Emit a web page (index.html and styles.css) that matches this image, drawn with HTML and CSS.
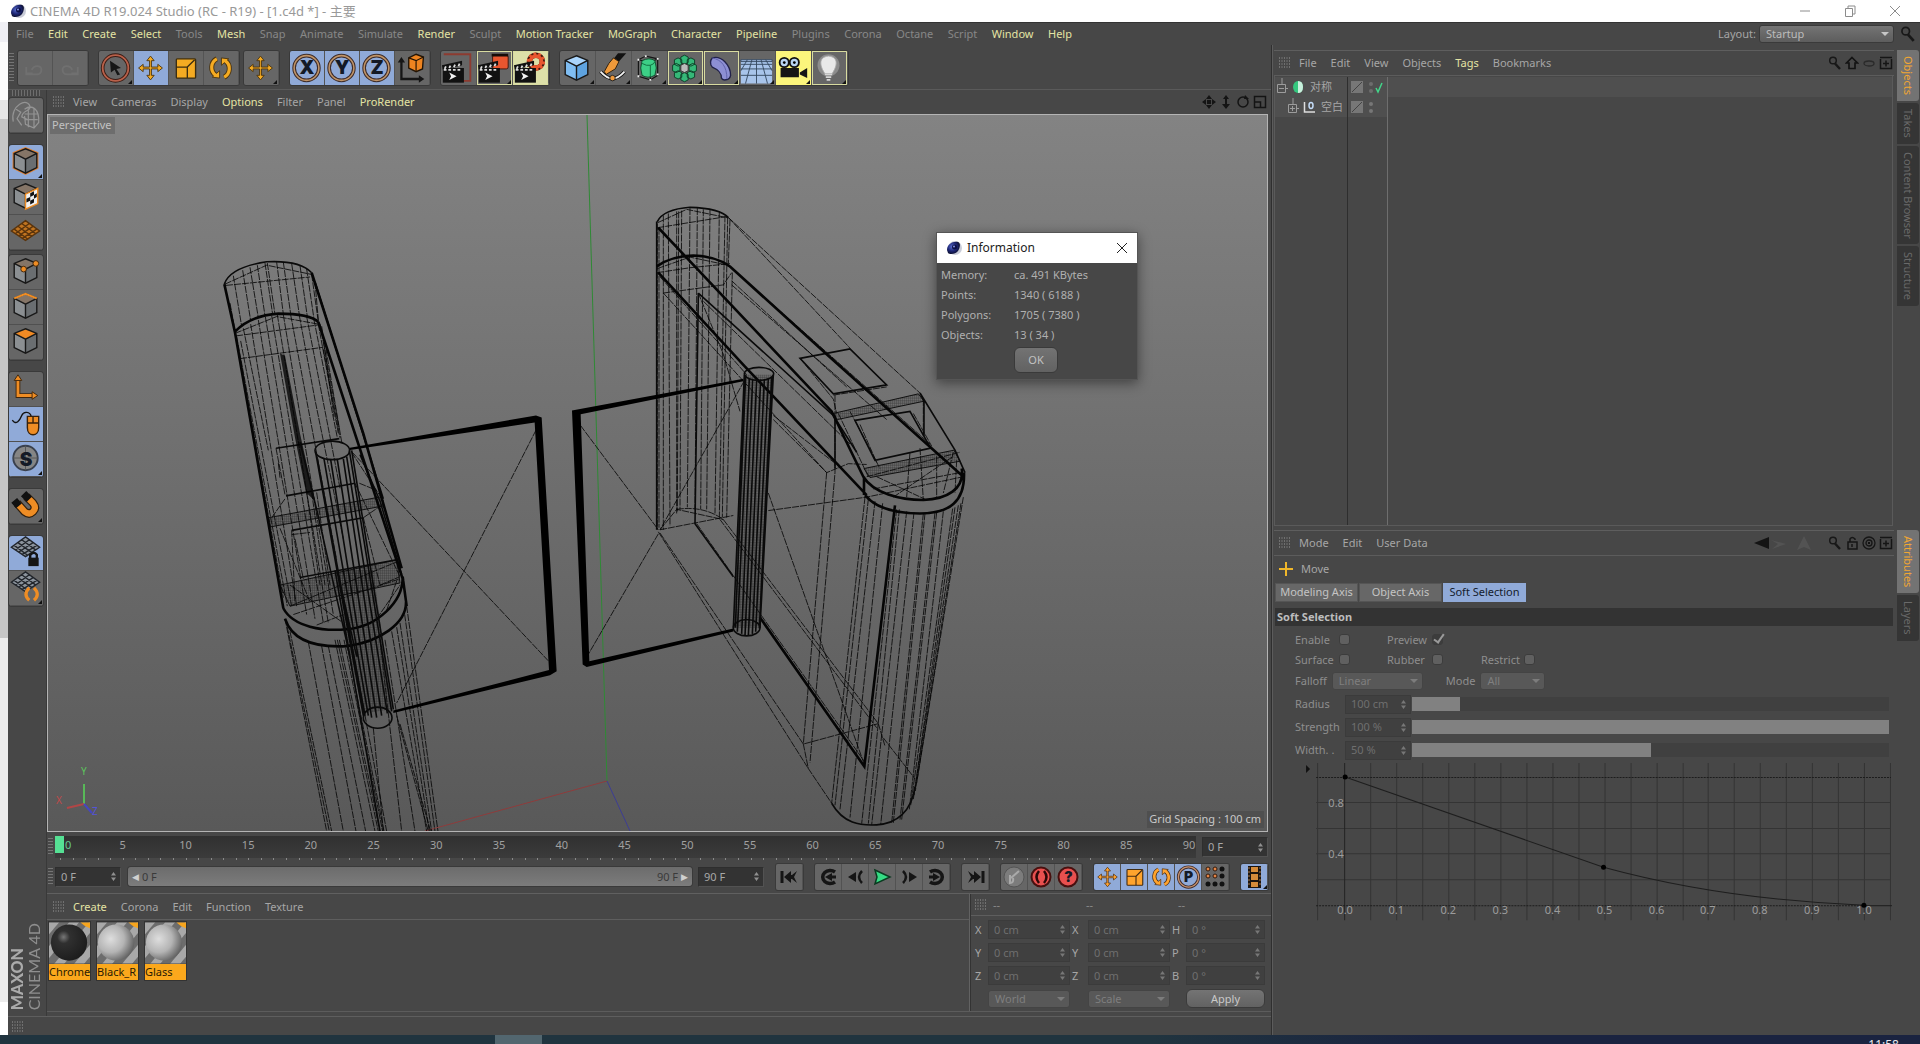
FILE: index.html
```html
<!DOCTYPE html>
<html lang="en">
<head>
<meta charset="utf-8">
<title>CINEMA 4D R19.024 Studio</title>
<link rel="stylesheet" href="styles.css">
</head>
<body>
<svg class="defs" aria-hidden="true">
  <defs>
    <radialGradient id="gDark" cx=".35" cy=".35" r=".7"><stop offset="0" stop-color="#777"/><stop offset=".25" stop-color="#303030"/><stop offset="1" stop-color="#1c1c1c"/></radialGradient>
    <radialGradient id="gLight" cx=".35" cy=".4" r=".75"><stop offset="0" stop-color="#dedede"/><stop offset=".5" stop-color="#b4b4b4"/><stop offset="1" stop-color="#4c4c4c"/></radialGradient>
    <radialGradient id="gLogo" cx=".4" cy=".4" r=".6"><stop offset="0" stop-color="#5a6ed0"/><stop offset=".6" stop-color="#1c2574"/><stop offset="1" stop-color="#0d1030"/></radialGradient>
    <pattern id="stripes" width="16" height="16" patternUnits="userSpaceOnUse" patternTransform="rotate(40)"><rect width="16" height="16" fill="#6c6c6c"/><rect width="8" height="16" fill="#a8a8a8"/></pattern>
    <pattern id="hatch" width="6" height="4" patternUnits="userSpaceOnUse"><path d="M0 1H6M2 0V4" stroke="#000" stroke-width="1" opacity=".55"/></pattern>
  </defs>
  <symbol id="logo" viewBox="0 0 16 16"><circle cx="9" cy="8" r="7" fill="#c9ccd8"/><path d="M1 10C1 4 7 1 12 2c3 1 2 6 0 9s-8 4-10 2z" fill="url(#gLogo)"/><circle cx="8.500" cy="7" r="2.500" fill="#0b0f45"/><circle cx="8" cy="6.500" r="1" fill="#8392e6"/></symbol>
  <symbol id="grip" viewBox="0 0 12 12"><path d="M0 1H12M0 4H12M0 7H12M0 10H12" stroke="#9a9a9a" stroke-width="1" stroke-dasharray="1 1.500"/></symbol>
  <symbol id="spin" viewBox="0 0 5 9"><path d="M0 3.500L2.500 0 5 3.500zM0 5.500L2.500 9 5 5.500z" fill="currentColor"/></symbol>
  <symbol id="mag" viewBox="0 0 14 14"><circle cx="5" cy="4.500" r="3.300" fill="none" stroke="#181818" stroke-width="1.500"/><path d="M7 7.500L12 13" stroke="#181818" stroke-width="2.400"/></symbol>
  <symbol id="home" viewBox="0 0 14 14"><path d="M7 1.500L12.500 7H10v5.500H4V7H1.500z" fill="none" stroke="#141414" stroke-width="1.700"/></symbol>
  <symbol id="eye" viewBox="0 0 14 14"><ellipse cx="7" cy="7.500" rx="5" ry="2.500" fill="none" stroke="#2a2a2a" stroke-width="1.300"/></symbol>
  <symbol id="plusbox" viewBox="0 0 14 14"><path d="M1.500 3V12.500H12.500V3M1 1.500H13M7 4.500v6M4 7.500h6" fill="none" stroke="#161616" stroke-width="1.500"/></symbol>
  <symbol id="undo" viewBox="0 0 36 34"><path d="M8 24h13c6-1 6-9 0-9-3 0-5 2-6 4m-6-3v7h7" fill="none" stroke="#707070" stroke-width="2"/></symbol>
  <symbol id="redo" viewBox="0 0 36 34"><path d="M28 24H15c-6-1-6-9 0-9 3 0 5 2 6 4m6-3v7h-7" fill="none" stroke="#707070" stroke-width="2"/></symbol>
  <symbol id="pick" viewBox="0 0 36 34"><circle cx="18" cy="17" r="14" fill="none" stroke="#3a1c14" stroke-width="4"/><circle cx="18" cy="17" r="14" fill="none" stroke="#b8604a" stroke-width="2"/><path d="M12 9l12 8-5 1 4 6-3 1-3-6-4 3z" fill="#161616"/></symbol>
  <symbol id="move" viewBox="0 0 36 34"><path d="M18 4l4 5h-3v7h7v-3l5 4-5 4v-3h-7v7h3l-4 5-4-5h3v-7h-7v3l-5-4 5-4v3h7V9h-3z" fill="#f5ab22" stroke="#4a3410" stroke-width="1"/></symbol>
  <symbol id="scale" viewBox="0 0 36 34"><rect x="8" y="7" width="21" height="21" rx="1" fill="#f5ab22" stroke="#3d2e10" stroke-width="1.500"/><path d="M8 16h12v12M20 16l8-8" fill="none" stroke="#3d2e10" stroke-width="1.500"/></symbol>
  <symbol id="rot" viewBox="0 0 36 34"><path d="M14 7a10.500 10.500 0 0 0-1 18M22 27a10.500 10.500 0 0 0 1-18" fill="none" stroke="#4a3410" stroke-width="5.500"/><path d="M9 27l8 1v-8zM27 7l-8-1v8z" fill="#f5ab22" stroke="#4a3410"/><path d="M14 7a10.500 10.500 0 0 0-1 18M22 27a10.500 10.500 0 0 0 1-18" fill="none" stroke="#f5ab22" stroke-width="3.500"/></symbol>
  <symbol id="ring" viewBox="0 0 36 34"><circle cx="18" cy="17" r="13.500" fill="none" stroke="#3d2c2a" stroke-width="4"/><circle cx="18" cy="17" r="13.500" fill="none" stroke="#c09468" stroke-width="1.700"/></symbol>
  <symbol id="coord" viewBox="0 0 36 34"><path d="M7 8v21h21" fill="none" stroke="#161616" stroke-width="2.500"/><path d="M3 11l4-6 4 6zM26 25l6 4-6 4z" fill="#161616"/><path d="M15 6l8-4 8 3-1 13-7 3-8-4z" fill="#ee8420" stroke="#241505" stroke-width="1.500"/><path d="M15 6l8 3 8-4M23 9v12" fill="none" stroke="#241505" stroke-width="1.300"/></symbol>
  <symbol id="clap" viewBox="0 0 36 34"><rect x="2" y="17" width="23" height="16" fill="#111"/><path d="M1 14l22-5v5L2 19z" fill="#111"/><path d="M4 18l2-4M9 17l2-4M14 16l2-4M19 15l2-4M3 19h20" stroke="#ddd" stroke-width="2" stroke-dasharray="3 2"/><path d="M9 22l8 4-8 4 2-4z" fill="#f2f2f2"/></symbol>
  <symbol id="cube" viewBox="0 0 34 34"><path class="c-top" d="M17 4l12 5-12 6L5 9z"/><path class="c-left" d="M5 9l12 6v15L5 24z"/><path class="c-right" d="M29 9l-12 6v15l12-6z"/><path d="M17 4l12 5v15l-12 6-12-6V9zM5 9l12 6 12-6M17 15v15" fill="none" stroke="#191919" stroke-width="1.500"/></symbol>
  <symbol id="pen" viewBox="0 0 36 34"><path d="M24 1h9l-8 9-5-4z" fill="#111"/><path d="M19 6l6 4-4 8-10 6-2-3 5-9z" fill="#f09a3a" stroke="#2a1a08"/><path d="M5 21q13 15 26 0" fill="none" stroke="#111" stroke-width="4"/><path d="M5 21q13 15 26 0" fill="none" stroke="#f1f1f1" stroke-width="2"/><circle cx="18" cy="28" r="3" fill="#f09a3a" stroke="#222"/></symbol>
  <symbol id="nurbs" viewBox="0 0 36 34"><path d="M7 8l8-4 13 3v18l-8 5-13-4zM7 8l13 3 8-4M20 11v19" fill="none" stroke="#161616" stroke-width="1.300"/><path d="M11 9q8-4 14 0 3 8 0 16-8 4-14 0-3-8 0-16z" fill="#3ccf86" stroke="#0d4a2c"/><path d="M11 12q5 3 9 2 4-1 5-4M20 14v13" fill="none" stroke="#0d6a3c"/><path d="M6 8h2M14 4h2M27 7h2M6 26h2M19 30h2M27 24h2" stroke="#eee" stroke-width="2"/></symbol>
  <symbol id="array" viewBox="0 0 36 34"><g fill="#35b878" stroke="#0c3c25"><path d="M14 5l4-2 4 2v6l-4 2-4-2zM14 24l4-2 4 2v6l-4 2-4-2zM5 14l4-2 4 2v6l-4 2-4-2zM23 14l4-2 4 2v6l-4 2-4-2zM7 8l4-2 4 2v5l-4 2-4-2zM21 8l4-2 4 2v5l-4 2-4-2zM7 22l4-2 4 2v5l-4 2-4-2zM21 22l4-2 4 2v5l-4 2-4-2z"/></g><path d="M14 14l4-2 4 2v6l-4 2-4-2z" fill="#bbb" stroke="#333"/></symbol>
  <symbol id="bend" viewBox="0 0 36 34"><path d="M9 6c10-3 20 8 20 19-1 6-9 6-10 3 0-6-3-9-10-12-3-3-2-8 0-10z" fill="#8d8fd4" stroke="#23234a" stroke-width="1.500"/><path d="M9 6c10 2 16 9 16 23" fill="none" stroke="#5d5fa8"/></symbol>
  <symbol id="floor" viewBox="0 0 36 34"><path d="M1 8h34v26H1z" fill="#a8c4ea"/><path d="M1 8h34v2H1zM1 13h34M1 18h34M1 25h34M13 8L6 34M18 8v26M23 8l7 26M8 8L1 20M28 8l7 12" fill="none" stroke="#34485f"/></symbol>
  <symbol id="cam" viewBox="0 0 36 34"><circle cx="9" cy="11" r="5" fill="#b8d4f4" stroke="#111" stroke-width="2"/><circle cx="20" cy="11" r="5" fill="#b8d4f4" stroke="#111" stroke-width="2"/><circle cx="9" cy="11" r="1.500"/><circle cx="20" cy="11" r="1.500"/><path d="M5 17h20v10H5zM26 22l8-5v11l-8-4z" fill="#151515"/></symbol>
  <symbol id="bulb" viewBox="0 0 36 34"><circle cx="18" cy="14" r="12" fill="#8c8c8c"/><path d="M18 4c-12 1-9 12-4 19h8c5-7 8-18-4-19z" fill="#e9e9e9" stroke="#aaa"/><path d="M14 24h8M15 27h6M16 30h4" stroke="#d6d6d6" stroke-width="2"/></symbol>
  <symbol id="sculpt" viewBox="0 0 34 34"><path d="M4 25C0 8 20-2 22 10c-2 5-8 3-9 10l6 3M16 12c8-6 16 0 15 14l-5 6-9-4-1-9M20 10v21M26 11v20M16 17h14M16 23h14M7 12l5 3-4 7 5 7" fill="none" stroke="#949494" stroke-width="1.300"/></symbol>
  <symbol id="mesh" viewBox="0 0 34 34"><path class="m-fill" d="M17 6l15 11-15 10L2 17z"/><path class="m-line" d="M17 6l15 11-15 10L2 17zM13 9l15 11M9 12l15 11M5 15l15 11M21 9L6 20M25 12L10 22M29 15L13 25" fill="none" stroke-width="1.500"/></symbol>
  <symbol id="axis" viewBox="0 0 34 34"><path d="M9 6v19h18" fill="none" stroke="#40260c" stroke-width="5"/><path d="M9 6v19h18" fill="none" stroke="#ef8d24" stroke-width="3"/><path d="M5 9l4-6 4 6zM24 21l6 4-6 4z" fill="#ef8d24" stroke="#40260c"/></symbol>
  <symbol id="mouse" viewBox="0 0 34 34"><path d="M3 14c4 6 8 0 10-5s9-4 10 1" fill="none" stroke="#141414" stroke-width="1.500"/><path d="M19 10h12v12c0 10-12 10-12 0z" fill="#ef8d24" stroke="#3a220a" stroke-width="1.500"/><path d="M19 17h12M25 10v7" stroke="#3a220a" stroke-width="1.500"/></symbol>
  <symbol id="magnet" viewBox="0 0 34 34"><path d="M8 15l8 9q5 4 9 0t0-9L18 8" fill="none" stroke="#30200f" stroke-width="9"/><path d="M8 15l8 9q5 4 9 0t0-9L18 8" fill="none" stroke="#ef8d24" stroke-width="6.500"/><path d="M5 12l5 6M15 5l6 6" stroke="#111" stroke-width="8"/></symbol>
  <symbol id="first" viewBox="0 0 27 26"><path d="M6 7v12" stroke="#151515" stroke-width="3"/><path d="M8 13l7-6v4h1l5-4-3 6 3 6-5-4h-1v4z" fill="#151515"/></symbol>
  <symbol id="loop" viewBox="0 0 27 26"><path d="M20 8a7.500 6.500 0 1 0 0 10" fill="none" stroke="#151515" stroke-width="3.500"/><path d="M10 13l7-4v2.500h4v3h-4V17z" fill="#151515"/></symbol>
  <symbol id="prevk" viewBox="0 0 27 26"><path d="M6 13l8-5v10z" fill="#151515"/><path d="M20 7q-6 6 0 12" fill="none" stroke="#151515" stroke-width="2.500"/></symbol>
  <symbol id="play" viewBox="0 0 27 26"><path d="M6 6l15 7-15 7 2-7z" fill="#35dc84" stroke="#0b3a20" stroke-width="1.500"/></symbol>
  <symbol id="globe" viewBox="0 0 34 34"><circle cx="17" cy="17" r="13" fill="#858585" stroke="#39404d" stroke-width="2"/><path d="M4 17h26M17 4v26" stroke="#555"/></symbol>
</svg>

<header class="titlebar">
  <svg class="i16"><use href="#logo"/></svg>
  <h1>CINEMA 4D R19.024 Studio (RC - R19) - [1.c4d *] - 主要</h1>
  <div class="winbtns">
    <button aria-label="Minimize"><svg viewBox="0 0 12 12"><path d="M1 6h10"/></svg></button>
    <button aria-label="Restore"><svg viewBox="0 0 12 12"><path d="M1.500 3.500h7v8h-7zM4 3V1h7v8H9"/></svg></button>
    <button aria-label="Close"><svg viewBox="0 0 12 12"><path d="M1 1l10 10M11 1L1 11"/></svg></button>
  </div>
</header>

<div class="desk">
  <div class="behind"></div>
  <div class="app">
    <nav class="mainmenu">
      <div class="menu dim">
        <button>File</button><button class="hot">Edit</button><button class="hot">Create</button><button class="hot">Select</button><button>Tools</button><button class="hot">Mesh</button><button>Snap</button><button>Animate</button><button>Simulate</button><button class="hot">Render</button><button>Sculpt</button><button class="hot">Motion Tracker</button><button class="hot">MoGraph</button><button class="hot">Character</button><button class="hot">Pipeline</button><button>Plugins</button><button>Corona</button><button>Octane</button><button>Script</button><button class="hot">Window</button><button class="hot">Help</button>
      </div>
      <div class="layoutpick">
        <label for="layout">Layout:</label>
        <span class="select grow"><select id="layout"><option>Startup</option></select></span>
        <svg class="i16"><use href="#mag"/></svg>
      </div>
    </nav>

    <div class="work">
      <div class="left">
        <div class="toolbar">
          <i class="vgrip"></i>
          <div class="bgroup"><button aria-label="Undo"><svg><use href="#undo"/></svg></button><button aria-label="Redo"><svg><use href="#redo"/></svg></button></div>
          <div class="pair">
            <div class="bgroup"><button class="more" aria-label="Live selection"><svg><use href="#pick"/></svg></button><button class="on" aria-label="Move"><svg><use href="#move"/></svg></button><button aria-label="Scale"><svg><use href="#scale"/></svg></button><button aria-label="Rotate"><svg><use href="#rot"/></svg></button></div>
            <div class="bgroup"><button class="more" aria-label="Last tool"><svg><use href="#move"/></svg></button></div>
          </div>
          <div class="bgroup"><button class="on letter"><svg><use href="#ring"/></svg><b>X</b></button><button class="on letter"><svg><use href="#ring"/></svg><b>Y</b></button><button class="on letter"><svg><use href="#ring"/></svg><b>Z</b></button><button aria-label="Coordinate system"><svg><use href="#coord"/></svg></button></div>
          <div class="bgroup roomy">
            <button aria-label="Render view"><svg viewBox="0 0 36 34"><path d="M3 2h29v29h-8" fill="none" stroke="#8d3b30" stroke-width="2"/><use href="#clap"/></svg></button>
            <button class="more yel" aria-label="Render to picture viewer"><svg viewBox="0 0 36 34"><rect x="17" y="3" width="17" height="15" rx="2" fill="#e8562f" stroke="#3a150c"/><path d="M16 3h18" stroke="#160c08" stroke-width="3"/><use href="#clap"/></svg></button>
            <button class="yel pale" aria-label="Render settings"><svg viewBox="0 0 36 34"><circle cx="25" cy="10" r="7" fill="none" stroke="#47190d" stroke-width="6"/><circle cx="25" cy="10" r="8.500" fill="none" stroke="#e8562f" stroke-width="3" stroke-dasharray="3 2.300"/><circle cx="25" cy="10" r="6" fill="none" stroke="#e8562f" stroke-width="4"/><use href="#clap"/></svg></button>
          </div>
          <div class="bgroup roomy">
            <button class="more" aria-label="Cube"><svg class="blue"><use href="#cube"/></svg></button><button class="more" aria-label="Pen"><svg><use href="#pen"/></svg></button><button class="more" aria-label="Subdivision surface"><svg><use href="#nurbs"/></svg></button><button class="more yel" aria-label="Array"><svg><use href="#array"/></svg></button><button class="more yel" aria-label="Bend"><svg><use href="#bend"/></svg></button><button class="more" aria-label="Floor"><svg><use href="#floor"/></svg></button><button class="more bright" aria-label="Camera"><svg><use href="#cam"/></svg></button><button class="more yel" aria-label="Light"><svg><use href="#bulb"/></svg></button>
          </div>
        </div>

        <div class="stage">
          <aside class="palette">
            <i class="hgrip"></i>
            <div class="vgroup"><button aria-label="Sculpt"><svg><use href="#sculpt"/></svg></button></div>
            <div class="vpair">
              <div class="vgroup">
                <button class="on more" aria-label="Model"><svg class="grey" viewBox="0 0 34 34"><path d="M17 4l12 5v15l-12 6-12-6V9z" fill="none" stroke="#e08030" stroke-width="3.500"/><use href="#cube"/></svg></button>
                <button aria-label="Texture"><svg class="grey" viewBox="0 0 34 34"><use href="#cube"/><path d="M17 15l13-6v16l-13 6z" fill="#f1f1f1" stroke="#ef8d24" stroke-width="1.500"/><path d="M18 20l4-2v4l-4 2zM22 14l4-2v4l-4 2zM22 22l4-2v4l-4 2zM26 16l3-2v4l-3 2z" fill="#111"/></svg></button>
                <button aria-label="Workplane"><svg class="omesh"><use href="#mesh"/></svg></button>
              </div>
              <div class="vgroup">
                <button aria-label="Points"><svg class="grey" viewBox="0 0 34 34"><use href="#cube"/><g fill="#ef8d24" stroke="#40260c"><circle cx="15" cy="15" r="3"/><circle cx="28" cy="9" r="3"/></g></svg></button>
                <button aria-label="Edges"><svg class="grey" viewBox="0 0 34 34"><use href="#cube"/><path d="M5 9l12-5 12 5" fill="none" stroke="#ef8d24" stroke-width="2"/></svg></button>
                <button aria-label="Polygons"><svg class="grey otop"><use href="#cube"/></svg></button>
              </div>
            </div>
            <div class="vgroup">
              <button aria-label="Axis"><svg><use href="#axis"/></svg></button>
              <button class="on" aria-label="Tweak"><svg><use href="#mouse"/></svg></button>
              <button class="on more letter"><svg><use href="#globe"/></svg><b>S</b></button>
            </div>
            <div class="vgroup"><button class="more" aria-label="Snap"><svg><use href="#magnet"/></svg></button></div>
            <div class="vgroup">
              <button class="on" aria-label="Lock workplane"><svg class="dmesh" viewBox="0 0 34 34"><use href="#mesh" y="-5"/><path d="M22 24v-4q4-4 7 0v4" fill="none" stroke="#151515" stroke-width="2.500"/><rect x="20" y="23" width="11" height="9" fill="#151515"/></svg></button>
              <button class="more" aria-label="Planar workplane"><svg class="dmesh" viewBox="0 0 34 34"><use href="#mesh" y="-5"/><path d="M21 18q-7 7 0 13M26 18q7 7 0 13" fill="none" stroke="#ef8d24" stroke-width="3.500"/></svg></button>
            </div>
            <p class="brand"><b>MAXON</b><span>CINEMA 4D</span></p>
          </aside>

          <div class="center">
            <nav class="bar">
              <svg class="i12"><use href="#grip"/></svg>
              <div class="menu"><button>View</button><button>Cameras</button><button>Display</button><button class="hot">Options</button><button>Filter</button><button>Panel</button><button class="hot">ProRender</button></div>
              <div class="baricons">
                <svg viewBox="0 0 14 14"><path d="M7 0l3 4H4zM7 14l3-4H4zM0 7l4-3v6zM14 7l-4-3v6zM5 5h4v4H5z" fill="#141414"/></svg>
                <svg viewBox="0 0 14 14"><path d="M7 0l3 4H8v5h3l-4 5-4-5h3V4H4z" fill="#141414"/></svg>
                <svg viewBox="0 0 14 14"><circle cx="7" cy="7" r="5" fill="none" stroke="#141414" stroke-width="1.500"/><path d="M9 0l4 4H8z" fill="#141414"/></svg>
                <svg viewBox="0 0 14 14"><path d="M1.500 1.500h11v11h-11zM1.500 7h6v5" fill="none" stroke="#141414" stroke-width="1.500"/></svg>
              </div>
            </nav>

            <main class="viewport">
              <svg class="scene" viewBox="47 114 1221 716" preserveAspectRatio="xMidYMid slice" aria-label="Wireframe of a turnstile">
                <path d="M587 114L607 780" stroke="#2f8a35" fill="none"/>
                <path d="M607 780L425 830" stroke="#8e3c3c" fill="none"/>
                <path d="M607 780L630 830" stroke="#3d3d94" fill="none"/>
                <g class="wire" transform="translate(200 180) scale(.33333 .42092)">
                  <g class="w1">
                    <path d="M78 248L330 228M108 368L355 342M75 245L200 200L335 222M105 362L230 322L355 340M120 422L370 395"/>
                    <path d="M100 225L125 345M128 212L152 332M150 205L175 325M172 200L195 320M195 195L218 317M202 195L225 317M230 193L250 316M250 193L272 316M275 196L298 318M300 201L322 322M320 209L342 328M335 222L355 335"/>
                    <path d="M90 290L250 990M110 370L262 1010M122 380L275 1010M130 350L205 640M152 340L290 1010M175 330L320 1030M196 322L345 1040M215 320L370 1050M232 318L385 1050M250 318L400 1030M272 318L410 900M298 320L345 520L430 850M320 322L420 730M342 330L412 610M355 340L415 600M360 340L418 590M370 400L420 610M378 400L425 620M345 240L355 330M365 345L402 560"/>
                    <path d="M228 635L255 745M235 670L240 705M215 800L255 755M320 740L360 960M335 740L375 960M350 740L390 960M240 825L330 1000M275 830L285 1000"/>
                    <path d="M455 645L550 760M465 718L600 940M478 718L530 735M490 800L545 770M275 840L330 835M285 850L310 945M490 800L540 960M540 960L600 940M270 1010L590 905M280 1030L600 945M270 960L430 1050M350 1055L430 1030M530 1040L600 960M560 1020L590 950"/>
                    <path d="M255 1040L380 1545M262 1060L388 1545M270 1070L395 1545M325 1095L430 1545M365 1105L468 1545M385 1105L497 1545M405 1090L525 1545M412 1090L535 1545M418 1090L540 1545M432 1090L548 1545M440 1100L552 1545M455 1100L560 1545M540 1090L605 1545M555 1090L645 1545M575 1070L680 1545M590 1060L688 1545M600 1050L695 1545M614 1030L705 1545M620 1010L714 1545M590 1270L685 1545M600 1290L692 1545M520 1300L550 1545"/>
                    <path d="M1008 592L590 1240M455 643L1045 1140"/>
                  </g>
                  <path class="hat" d="M205 800L545 750L550 772L210 822zM240 960L590 900L600 955L270 1010z"/>
                  <path class="w2" d="M73 245Q90 205 200 192Q300 188 335 218M228 635L418 612M258 748L465 718M275 830L490 800M300 942L590 900M480 650L540 760L605 935M345 240L550 755"/>
                  <path class="w3" d="M73 245L105 360L250 1015M105 358Q150 320 235 315Q330 315 355 335M335 218L490 600L605 920M355 335L560 830L610 950M250 1015C280 1060 370 1070 440 1065C530 1060 610 1000 608 940M255 1040C280 1100 370 1108 440 1105C540 1095 620 1050 618 1000M608 940L620 1010"/>
                  <path d="M240 410L255 415L300 600L345 760L318 740L285 610z" opacity=".75" fill="#000"/>
                  <path d="M405 925L520 925L575 1255L490 1265L450 1130z" fill="url(#hatch)"/>
                  <path class="w2" d="M347 645L490 1270M352 660L495 1270M372 660L505 1270M392 662L515 1275M412 662L530 1275M430 660L545 1270M440 655L562 1265M448 640L575 1260M455 640L580 1255M405 925L450 1130L540 1545M412 925L470 1130M300 620L350 780L450 1130"/>
                  <ellipse class="w2" cx="397" cy="640" rx="52" ry="22"/><ellipse class="w2" cx="533" cy="1275" rx="43" ry="25"/>
                  <path d="M450 634L1008 557L1025 562L1070 1165L1050 1174L580 1264V1258L1047 1162L1004 574L450 639z" fill-rule="evenodd" fill="#000"/>
                </g>
                <g class="wire" transform="translate(560 190) scale(.33333 .40816)">
                  <g class="w1">
                    <path d="M292 90L505 62M292 78L380 45L505 66M292 200L390 188L510 178M292 190L390 162L505 182M310 250L490 230L515 200M300 830L350 780L490 805M350 780Q430 770 490 805"/>
                    <path d="M292 80V830M297 90V825M310 60V830M325 55L330 820M350 50V790M356 50L352 785M365 48L360 780M390 42L382 775M412 42L405 780M430 45L422 780M450 45L440 780M478 50L465 790M495 60L478 800M503 65L487 800M510 70L505 180M517 200L500 800"/>
                    <path d="M505 65L870 385M505 65L1080 495M510 185L1110 620M515 230L980 560M310 250L800 690M515 220L860 480M300 210L560 450M415 250L490 400L540 540M430 270L870 620M625 740L915 1410M640 560L800 690L865 668L920 670M800 690L730 1355L745 1415M825 500V690L750 1400M640 550L830 670"/>
                    <path d="M300 830L520 795M625 783L920 750L1210 700M295 835L745 1415L815 1500M300 838L730 1355L955 1305M490 805L955 1305L975 1360M480 805L950 1315M410 815L915 1400M970 1340L1065 1440"/>
                    <path d="M915 750L815 1500M925 755L825 1505M945 760L840 1515M968 765L870 1535M1010 780L905 1550M1018 780L925 1550M1040 785L935 1553M1062 787L962 1553M1090 790L995 1548M1095 790L1000 1548M1125 788L1020 1540M1130 788L1025 1540M1150 785L1048 1515M1178 778L1052 1505M1185 775L1060 1490M1195 770L1062 1480M1203 765L1066 1470M1210 750L1070 1450"/>
                    <path d="M720 410L820 510L830 545M835 545L925 700M870 540L960 680M820 500L980 480M900 572L950 665M1060 545L1115 625M1090 510V600M920 700L1200 640M940 730L1200 690M1000 750L1180 650M950 700L1100 757M1050 640L1040 750M1080 630L1090 757M1130 650L1130 750M1180 640L1150 740M1190 660L1185 740"/>
                    <path d="M62 575L295 830M295 840L85 1135M553 465L300 830"/>
                  </g>
                  <path class="hat" d="M820 545L1075 497L1092 515L832 560zM912 680L1182 635L1200 662L930 702z"/>
                  <path class="w2" d="M292 75Q310 45 390 40Q480 42 505 65M290 75V830M720 410L870 387L980 475L820 497zM885 562L1050 540L1112 630L945 660zM1080 495L1185 635L1215 690M415 250L820 550L890 640M415 250L405 815L520 945M815 1500C850 1550 900 1555 950 1553C1010 1550 1055 1520 1065 1460M825 550V680M1080 495L1092 515V600"/>
                  <path class="w3" d="M290 185Q330 160 400 158Q470 160 510 185L800 400L1210 700M295 90L815 540L910 700M295 200L555 430L920 745M910 700C940 740 1020 757 1090 757C1160 755 1215 730 1205 680M915 745C950 780 1020 790 1080 790C1170 790 1215 760 1212 690M912 700V745M600 1045L913 1410L1005 770"/>
                  <path d="M553 450L640 450L600 1070L520 1070z" fill="url(#hatch)"/>
                  <path class="w2" d="M553 450L520 1070M557 450L526 1070M568 460L532 1080M578 460L545 1085M590 462L555 1090M602 462L565 1090M613 462L577 1085M625 458L587 1080M635 455L598 1072M640 450L600 1070"/>
                  <ellipse class="w2" cx="597" cy="448" rx="44" ry="16"/><ellipse class="w2" cx="560" cy="1070" rx="40" ry="20"/>
                  <path d="M36 538L550 460V466L62 547L88 1152L520 1072V1079L80 1166L68 1160z" fill="#000"/>
                </g>
                <g fill="none" stroke-width="2"><path d="M84 803V783" stroke="#58b858"/><path d="M84 803L67 807" stroke="#b04646"/><path d="M84 803L92 812" stroke="#4646c0"/></g>
                <g class="gizmotext"><text x="81" y="774" fill="#5cc45c">Y</text><text x="56" y="803" fill="#c04a4a">X</text><text x="92" y="814" fill="#5454d8">Z</text></g>
              </svg>
              <span class="vtag">Perspective</span>
              <span class="vtag grid">Grid Spacing : 100 cm</span>
              <section class="dialog" role="dialog" aria-labelledby="dt">
                <header><svg class="i16"><use href="#logo"/></svg><h2 id="dt">Information</h2><button aria-label="Close"><svg viewBox="0 0 12 12"><path d="M1 1l10 10M11 1L1 11"/></svg></button></header>
                <dl><dt>Memory:</dt><dd>ca. 491 KBytes</dd><dt>Points:</dt><dd>1340 ( 6188 )</dd><dt>Polygons:</dt><dd>1705 ( 7380 )</dd><dt>Objects:</dt><dd>13 ( 34 )</dd></dl>
                <button class="ok">OK</button>
              </section>
            </main>

            <div class="rulerrow">
              <i class="vgrip"></i>
              <div class="ruler"><span class="zero"><i></i>0</span><span>5</span><span>10</span><span>15</span><span>20</span><span>25</span><span>30</span><span>35</span><span>40</span><span>45</span><span>50</span><span>55</span><span>60</span><span>65</span><span>70</span><span>75</span><span>80</span><span>85</span><span>90</span></div>
              <span class="field w65"><input value="0 F" aria-label="Current frame"><svg><use href="#spin"/></svg></span>
            </div>

            <div class="transport">
              <div class="range">
                <i class="vgrip"></i>
                <span class="field w65"><input value="0 F" aria-label="Start frame"><svg><use href="#spin"/></svg></span>
                <div class="scrub"><button>◀</button><span>0 F</span><span class="end">90 F</span><button>▶</button></div>
                <span class="field w65"><input value="90 F" aria-label="End frame"><svg><use href="#spin"/></svg></span>
              </div>
              <div class="tgroup"><button aria-label="Go to start"><svg><use href="#first"/></svg></button></div>
              <div class="tgroup"><button aria-label="Previous key"><svg><use href="#loop"/></svg></button><button aria-label="Previous frame"><svg><use href="#prevk"/></svg></button><button aria-label="Play"><svg><use href="#play"/></svg></button><button aria-label="Next frame"><svg class="flip"><use href="#prevk"/></svg></button><button aria-label="Next key"><svg class="flip"><use href="#loop"/></svg></button></div>
              <div class="tgroup"><button aria-label="Go to end"><svg class="flip"><use href="#first"/></svg></button></div>
              <div class="tgroup">
                <button aria-label="Record"><svg viewBox="0 0 27 26"><circle cx="13" cy="13" r="10" fill="#7c7c7c" stroke="#555"/><path d="M18 7l-8 7m-1-3v8q4 0 3-5" stroke="#a9a9a9" stroke-width="2" fill="none"/></svg></button>
                <button aria-label="Autokey"><svg viewBox="0 0 27 26"><circle cx="13" cy="13" r="9.500" fill="#e8504f" stroke="#48100f" stroke-width="2"/><path d="M11 7q-5 6 0 12M16 7q5 6 0 12" stroke="#2c0808" stroke-width="2.500" fill="none"/></svg></button>
                <button class="letter" aria-label="Keyframe help"><svg viewBox="0 0 27 26"><circle cx="13" cy="13" r="9.500" fill="#e8504f" stroke="#48100f" stroke-width="2"/></svg><b>?</b></button>
              </div>
              <div class="tgroup orange">
                <button class="on" aria-label="Position"><svg><use href="#move"/></svg></button><button class="on" aria-label="Scale key"><svg><use href="#scale"/></svg></button><button class="on" aria-label="Rotation key"><svg><use href="#rot"/></svg></button><button class="on letter"><svg><use href="#ring"/></svg><b>P</b></button>
                <button aria-label="Point level"><svg viewBox="0 0 27 26"><g fill="#d9893a" stroke="#2b1a0b"><circle cx="6" cy="5" r="2"/><circle cx="13" cy="5" r="2"/><circle cx="6" cy="12" r="2"/><circle cx="13" cy="12" r="2"/></g><g fill="#111"><circle cx="20" cy="5" r="2.500"/><circle cx="20" cy="12" r="2.500"/><circle cx="6" cy="20" r="2.500"/><circle cx="13" cy="20" r="2.500"/><circle cx="20" cy="20" r="2.500"/></g></svg></button>
              </div>
              <div class="tgroup"><button class="on more" aria-label="Timeline"><svg viewBox="0 0 27 26"><rect x="7" y="2" width="13" height="22" fill="#1b1510"/><path d="M10 3h7v5h-7zM10 10h7v6h-7zM10 18h7v5h-7z" fill="#d58b3a"/><path d="M8 3v20M19 3v20" stroke="#a8794a" stroke-dasharray="2 2"/></svg></button></div>
            </div>

            <div class="bottom">
              <section class="materials">
                <nav class="bar"><svg class="i12"><use href="#grip"/></svg><div class="menu"><button class="hot">Create</button><button>Corona</button><button>Edit</button><button>Function</button><button>Texture</button></div></nav>
                <div class="mats">
                  <figure><svg viewBox="0 0 43 43"><rect width="43" height="43" fill="url(#stripes)"/><path d="M33 0h10v6l-5-2z" fill="#f7a51e"/><circle cx="21" cy="21" r="19" fill="url(#gDark)"/></svg><figcaption>Chrome</figcaption></figure>
                  <figure><svg viewBox="0 0 43 43"><rect width="43" height="43" fill="url(#stripes)"/><path d="M33 0h10v6l-5-2z" fill="#f7a51e"/><circle cx="20" cy="21" r="19" fill="url(#gLight)"/></svg><figcaption>Black_R</figcaption></figure>
                  <figure><svg viewBox="0 0 43 43"><rect width="43" height="43" fill="url(#stripes)"/><path d="M33 0h10v6l-5-2z" fill="#f7a51e"/><circle cx="20" cy="21" r="19" fill="url(#gLight)"/></svg><figcaption>Glass</figcaption></figure>
                </div>
              </section>
              <section class="coords">
                <div class="chead"><svg class="i12"><use href="#grip"/></svg><span>--</span><span>--</span><span>--</span></div>
                <div class="cgrid">
                  <label for="px">X</label><span class="field"><input id="px" value="0 cm" disabled><svg><use href="#spin"/></svg></span>
                  <label for="sx">X</label><span class="field"><input id="sx" value="0 cm" disabled><svg><use href="#spin"/></svg></span>
                  <label for="rh">H</label><span class="field"><input id="rh" value="0 °" disabled><svg><use href="#spin"/></svg></span>
                  <label for="py">Y</label><span class="field"><input id="py" value="0 cm" disabled><svg><use href="#spin"/></svg></span>
                  <label for="sy">Y</label><span class="field"><input id="sy" value="0 cm" disabled><svg><use href="#spin"/></svg></span>
                  <label for="rp">P</label><span class="field"><input id="rp" value="0 °" disabled><svg><use href="#spin"/></svg></span>
                  <label for="pz">Z</label><span class="field"><input id="pz" value="0 cm" disabled><svg><use href="#spin"/></svg></span>
                  <label for="sz">Z</label><span class="field"><input id="sz" value="0 cm" disabled><svg><use href="#spin"/></svg></span>
                  <label for="rb">B</label><span class="field"><input id="rb" value="0 °" disabled><svg><use href="#spin"/></svg></span>
                  <i></i><span class="select off"><select aria-label="Space" disabled><option>World</option></select></span>
                  <i></i><span class="select off"><select aria-label="Size mode" disabled><option>Scale</option></select></span>
                  <i></i><button class="apply">Apply</button>
                </div>
              </section>
            </div>
          </div>
        </div>
        <footer class="status"><svg class="i12"><use href="#grip"/></svg></footer>
      </div>

      <div class="right">
        <div class="pane objects">
          <section>
            <nav class="bar"><svg class="i12"><use href="#grip"/></svg><div class="menu"><button>File</button><button>Edit</button><button>View</button><button>Objects</button><button class="hot">Tags</button><button>Bookmarks</button></div>
              <div class="baricons"><svg><use href="#mag"/></svg><svg><use href="#home"/></svg><svg><use href="#eye"/></svg><svg><use href="#plusbox"/></svg></div></nav>
            <div class="tree">
              <ul class="names">
                <li><svg class="exp" viewBox="0 0 12 18"><path d="M6 0v6M1.500 6.500h8v8h-8zM3 10.500h5M10 10.500h2"/></svg><svg class="i12" viewBox="0 0 12 12"><ellipse cx="6" cy="6" rx="5" ry="6" fill="#34c77e"/><path d="M6 0q5 0 5 6t-5 6z" fill="#c8f0dc"/></svg><span>对称</span></li>
                <li class="child"><svg class="exp" viewBox="0 0 12 18"><path d="M6 0v6M1.500 6.500h8v8h-8zM3 10.500h5M5.500 8v5M10 10.500h2"/></svg><svg class="i12" viewBox="0 0 12 12"><path d="M1.500 1v10H12" fill="none" stroke="#ddd" stroke-width="1.500"/><ellipse cx="8" cy="4.500" rx="2" ry="3" fill="none" stroke="#c4dcf8" stroke-width="1.500"/></svg><span>空白</span></li>
              </ul>
              <ul class="flags">
                <li><svg viewBox="0 0 36 14"><path d="M2 1h12v12H2z" fill="#777"/><path d="M3 12L13 2" stroke="#444"/><circle cx="22" cy="4" r="2" fill="#6d6d6d"/><circle cx="22" cy="11" r="2" fill="#6d6d6d"/><path d="M27 8l2 4 4-9" fill="none" stroke="#42d68a" stroke-width="1.500"/></svg></li>
                <li><svg viewBox="0 0 36 14"><path d="M2 1h12v12H2z" fill="#777"/><path d="M3 12L13 2" stroke="#444"/><circle cx="22" cy="4" r="2" fill="#777"/><circle cx="22" cy="11" r="2" fill="#777"/></svg></li>
              </ul>
              <div class="tags"></div>
            </div>
          </section>
          <div class="tabs"><button class="cur">Objects</button><button>Takes</button><button>Content Browser</button><button>Structure</button></div>
        </div>

        <div class="pane attrs">
          <section>
            <nav class="bar"><svg class="i12"><use href="#grip"/></svg><div class="menu"><button>Mode</button><button>Edit</button><button>User Data</button></div>
              <div class="baricons"><svg class="wide" viewBox="0 0 34 14"><path d="M15 1v12L0 7z" fill="#141414"/><path d="M17 4l15 4-14 5 6-5z" fill="#535353"/></svg><svg class="wide" viewBox="0 0 34 14"><path d="M13 0l7 14-7-3-7 3z" fill="#535353"/></svg><svg><use href="#mag"/></svg><svg viewBox="0 0 14 14"><path d="M3 6h9v7H3zM5 6V3q2-3 5 0v1M7 8v3" fill="none" stroke="#161616" stroke-width="1.500"/></svg><svg viewBox="0 0 14 14"><g fill="none" stroke="#161616" stroke-width="1.300"><circle cx="7" cy="7" r="6"/><circle cx="7" cy="7" r="3"/></g><circle cx="7" cy="7" r="1"/></svg><svg><use href="#plusbox"/></svg></div></nav>
            <div class="toolname"><svg viewBox="0 0 14 14"><path d="M7 0v14M0 7h14" stroke="#f0b72a" stroke-width="2"/></svg>Move</div>
            <div class="segs"><button>Modeling Axis</button><button>Object Axis</button><button class="on">Soft Selection</button></div>
            <h3>Soft Selection</h3>
            <div class="form">
              <div class="checks">
                <label for="en">Enable</label><input type="checkbox" id="en" disabled>
                <label for="pv">Preview</label><input type="checkbox" id="pv" checked disabled>
                <i></i><i></i>
                <label for="su">Surface</label><input type="checkbox" id="su" disabled>
                <label for="ru">Rubber</label><input type="checkbox" id="ru" disabled>
                <label for="re">Restrict</label><input type="checkbox" id="re" disabled>
              </div>
              <div class="drops"><label for="fa">Falloff</label><span class="select off wa"><select id="fa" disabled><option>Linear</option></select></span><label class="second" for="mo">Mode</label><span class="select off wb"><select id="mo" disabled><option>All</option></select></span></div>
              <div class="srow"><label for="ra">Radius</label><span class="field w65"><input id="ra" value="100 cm" disabled><svg><use href="#spin"/></svg></span><input type="range" aria-label="Radius slider" value="10" style="--v:10%" disabled></div>
              <div class="srow"><label for="st">Strength</label><span class="field w65"><input id="st" value="100 %" disabled><svg><use href="#spin"/></svg></span><input type="range" aria-label="Strength slider" value="100" style="--v:100%" disabled></div>
              <div class="srow"><label for="wi">Width. .</label><span class="field w65"><input id="wi" value="50 %" disabled><svg><use href="#spin"/></svg></span><input type="range" aria-label="Width slider" value="50" style="--v:50%" disabled></div>
            </div>
            <svg class="graph" viewBox="1274 762 619 163" aria-label="Falloff curve">
              <path d="M1306 765l4 4-4 4z" fill="#111"/>
              <path class="gl" d="M1317.500 763V920M1370.500 763V920M1396.500 763V920M1422.500 763V920M1448.500 763V920M1474.500 763V920M1500.500 763V920M1526.500 763V920M1552.500 763V920M1578.500 763V920M1604.500 763V920M1630.500 763V920M1656.500 763V920M1682.500 763V920M1707.500 763V920M1733.500 763V920M1759.500 763V920M1785.500 763V920M1811.500 763V920M1837.500 763V920M1863.500 763V920M1889.500 763V920M1316 802.500H1890M1316 828.500H1890M1316 853.500H1890M1316 879.500H1890"/>
              <path d="M1344.500 763V920" stroke="#242424"/><path d="M1316 777.500H1890M1316 905.500H1863" stroke="#1d1d1d" stroke-dasharray="2 1"/><path d="M1863 905.500h28" stroke="#1d1d1d"/>
              <path d="M1345 777L1603 867Q1720 899 1863 905" fill="none" stroke="#1e1e1e"/>
              <circle cx="1345" cy="777" r="2.500"/><circle cx="1603" cy="867" r="2.500"/><circle cx="1863" cy="905" r="2.500"/>
              <g class="gt"><text x="1336" y="807">0.8</text><text x="1336" y="858">0.4</text><text x="1345" y="914">0.0</text><text x="1396" y="914">0.1</text><text x="1448" y="914">0.2</text><text x="1500" y="914">0.3</text><text x="1552" y="914">0.4</text><text x="1604" y="914">0.5</text><text x="1656" y="914">0.6</text><text x="1707" y="914">0.7</text><text x="1759" y="914">0.8</text><text x="1811" y="914">0.9</text><text x="1863" y="914">1.0</text></g>
            </svg>
          </section>
          <div class="tabs"><button class="cur">Attributes</button><button>Layers</button></div>
        </div>
      </div>
    </div>
  </div>
</div>
<div class="taskbar"><i></i><time>11:58</time></div>
</body>
</html>
```
FILE: styles.css
```css
* { box-sizing: border-box; }
html, body { margin: 0; height: 100%; }
body {
  display: flex; flex-direction: column; min-height: 100vh; overflow: hidden;
  background: #fff; color: #a6a6a6;
  font: 11px/14px "Noto Sans", "Noto Sans CJK SC", sans-serif;
}
button, input, select { font: inherit; color: inherit; margin: 0; padding: 0; border: 0; background: none; border-radius: 0; }
h1, h2, h3, p, ul, dl, dd, figure { margin: 0; padding: 0; font: inherit; }
ul { list-style: none; }
svg { display: block; flex: none; }
.defs { position: absolute; width: 0; height: 0; }
.i16 { width: 16px; height: 16px; }
.i12 { width: 12px; height: 12px; }

/* window frame */
.titlebar { display: flex; align-items: center; gap: 4px; height: 22px; padding-left: 10px; background: #fff; }
.titlebar h1 { color: #999; font-size: 13px; flex: 1; }
.winbtns { display: flex; gap: 33px; padding: 0 19px 0 0; }
.winbtns button { width: 12px; height: 12px; }
.winbtns svg, .dialog header button svg { width: 12px; height: 12px; fill: none; stroke: #8c8c8c; }
.desk { flex: 1; display: flex; min-height: 0; }
.behind { width: 8px; background: linear-gradient(#efeff4 0 20px, #fbfbfb 20px 78px, #e6e6e6 78px 97px, #c6c6c6 97px 616px, #ececec 616px 980px, #fff 980px); }
.app { flex: 1; min-width: 0; display: flex; flex-direction: column; background: #474747; border-top: 1px solid #333; }

.mainmenu { display: flex; justify-content: space-between; align-items: center; height: 22px; padding: 0 4px 0 8px; }
.menu { display: flex; gap: 14px; white-space: nowrap; }
.menu.dim { flex: 0 1 1056px; justify-content: space-between; gap: 0; color: #888; }
.menu .hot { color: #e4e4a4; }
.layoutpick { display: flex; align-items: center; gap: 3px; }
.select { position: relative; display: block; height: 18px; border: 1px solid #3a3a3a; border-radius: 3px; background: linear-gradient(#747474, #5d5d5d); color: #bcbcbc; }
.select.grow { width: 135px; margin-right: 3px; }
.select select { appearance: none; width: 100%; height: 100%; padding: 0 6px; display: block; opacity: 1; }
.select::after { content: ""; position: absolute; right: 4px; top: 6px; border: 4px solid transparent; border-top-color: #c6c6c6; border-bottom: 0; }
.select.off { background: #585858; color: #7f7f7f; border-color: #444; }
.select.off::after { border-top-color: #7c7c7c; }

.work { flex: 1; display: grid; grid-template-columns: minmax(0, 1264fr) minmax(0, 648fr); min-height: 0; }
.left { display: flex; flex-direction: column; min-height: 0; border-right: 1px solid #2f2f2f; }

/* icon buttons */
.toolbar { display: flex; align-items: center; gap: 9px; height: 45px; padding: 2px 0 1px 1px; border-bottom: 1px solid #5a5a5a; }
.pair { display: flex; gap: 3px; }
.vgrip { width: 5px; height: 18px; background: repeating-linear-gradient(#888 0 1px, transparent 1px 3px); opacity: .7; }
.toolbar .vgrip { height: 30px; margin-right: -6px; }
.bgroup { display: flex; border: 1px solid #393939; border-radius: 3px; overflow: hidden; }
.bgroup button { width: 35px; height: 34px; border-right: 1px solid #545454; }
.bgroup.roomy button { width: 36px; }
.bgroup button, .vgroup button, .tgroup button { position: relative; background: #666; }
.bgroup svg, .vgroup svg { width: 33px; height: 32px; }
button.on { background: #90aad8 !important; }
.yel { box-shadow: inset 0 0 0 1px #d8dba0; }
.pale { background: #dcdfa8 !important; }
.bright { background: #fbf57c !important; }
.more::after { content: ""; position: absolute; right: 1px; bottom: 1px; border: 2px solid #111; border-top-color: transparent; border-left-color: transparent; }
.letter b { position: absolute; inset: 0; display: flex; align-items: center; justify-content: center; color: #141a26; font: 900 19px/1 "Inter", sans-serif; }
.c-top { fill: var(--t); } .c-left { fill: var(--l); } .c-right { fill: var(--r); }
.blue { --t: #a9d4fb; --l: #7fbdf2; --r: #5ea3e0; }
.grey { --t: #857567; --l: #8b8f92; --r: #6a6e71; }
.otop { --t: #f08a24; }
.m-fill { fill: var(--f); } .m-line { stroke: var(--s); }
.omesh { --f: #c07420; --s: #5a340c; }
.dmesh { --f: #8b939c; --s: #22262c; }

.stage { flex: 1; display: flex; min-height: 0; }
.palette { width: 38px; display: flex; flex-direction: column; gap: 12px; padding-left: 1px; }
.hgrip { width: 28px; height: 6px; margin: 0 0 -10px 3px; background: repeating-linear-gradient(90deg, #888 0 1px, transparent 1px 3px); opacity: .6; }
.vpair { display: flex; flex-direction: column; gap: 5px; }
.vgroup { width: 34px; border-radius: 3px; overflow: hidden; box-shadow: 0 0 0 1px #3a3a3a; }
.vgroup button { display: flex; width: 34px; height: 35px; border-bottom: 1px solid #505050; }
.brand { writing-mode: vertical-rl; transform: rotate(180deg); margin: auto 0 6px; display: flex; flex-direction: column-reverse; align-self: flex-start; font: 16px/18px "Lato", sans-serif; color: #8f8f8f; }
.brand b { order: 2; font: 900 16px/16px "Lato", sans-serif; color: #aaa; }
.brand span { order: 1; }

.center { flex: 1; min-width: 0; display: flex; flex-direction: column; border-left: 1px solid #393939; }
.bar { display: flex; align-items: center; gap: 8px; height: 24px; padding: 0 4px 0 6px; }
.baricons { margin-left: auto; display: flex; gap: 3px; }
.baricons svg { width: 14px; height: 14px; }
.baricons .wide { width: 34px; }

.viewport { position: relative; flex: 1; min-height: 0; margin-right: 3px; border: 1px solid #b4b4b4; background: linear-gradient(#838383, #595959); overflow: hidden; }
.scene { position: absolute; inset: 0; width: 100%; height: 100%; }
.wire path, .wire ellipse { vector-effect: non-scaling-stroke; }
.wire .w1 path { fill: none; stroke: #000; stroke-width: 1px; stroke-opacity: .78; stroke-dasharray: 7 1; }
.wire .w2 { fill: none; stroke: #0a0a0a; stroke-width: 1.6px; }
.wire .w3 { fill: none; stroke: #050505; stroke-width: 2.6px; }
.wire .hat { fill: url(#hatch); stroke: #111; stroke-width: 1px; }
.gizmotext text { font: 10px "Noto Sans", sans-serif; }
.vtag { position: absolute; left: 2px; top: 2px; padding: 1px 3px 2px 2px; background: #6d6d6d; color: #c2c2c2; }
.vtag.grid { left: auto; top: auto; right: 3px; bottom: 3px; background: #4f4f4f; color: #c9c9c9; }

.dialog { position: absolute; right: 129px; top: 117px; width: 202px; padding-bottom: 6px; background: #474747; border: 1px solid #555; box-shadow: 0 3px 12px rgba(0,0,0,.45); }
.dialog header { display: flex; align-items: center; gap: 5px; height: 30px; padding: 0 9px; background: #fff; color: #222; }
.dialog h2 { flex: 1; font-size: 12px; }
.dialog header button svg { stroke: #222; }
.dialog dl { display: grid; grid-template-columns: 73px 1fr; line-height: 20px; padding: 2px 4px 1px; color: #b0b0b0; }
.dialog .ok { display: block; width: 44px; height: 26px; margin: 1px 0 0 77px; border-radius: 6px; background: linear-gradient(#737373, #626262); border: 1px solid #3a3a3a; color: #c2c2c2; }

.field { display: flex; align-items: center; height: 20px; padding: 0 4px 0 5px; background: #333; border: 1px solid #2e2e2e; border-right-color: #525252; border-bottom-color: #525252; color: #a8a8a8; }
.field input { flex: 1; width: 0; min-width: 0; }
.field svg { width: 5px; height: 9px; color: #909090; }
.field:has(:disabled) { height: 19px; background: #404040; border-color: #3b3b3b; color: #6f6f6f; }
.field:has(:disabled) svg { color: #777; }
.w65 { flex: none; width: 66px; }

.rulerrow { display: flex; align-items: center; height: 30px; padding: 0 3px 0 1px; gap: 2px; }
.ruler { flex: 1; display: flex; justify-content: space-between; height: 22px; margin-right: 4px; padding: 2px 2px 0 0; position: relative; background: linear-gradient(#303030, #3b3b3b); color: #a0a0a0; }
.ruler::after { content: ""; position: absolute; left: 5px; right: 6px; bottom: -2px; height: 2px; background: repeating-linear-gradient(90deg, #8a8a8a 0 1px, transparent 1px calc(100% / 90)); }
.ruler span { width: 10px; display: flex; justify-content: center; }
.ruler .zero { justify-content: flex-start; gap: 1px; color: #64c890; }
.zero i { flex: none; width: 9px; height: 17px; margin-top: -2px; background: #55e094; }

.transport { display: flex; align-items: center; gap: 12px; height: 29px; padding: 0 3px 0 1px; }
.range { flex: 1; display: flex; align-items: center; gap: 2px; }
.scrub { flex: 1; display: flex; align-items: center; gap: 3px; height: 19px; margin: 0 4px 0 5px; padding: 0 4px; border-radius: 3px; background: linear-gradient(#6c6c6c, #7c7c7c); box-shadow: 0 0 0 1px #3a3a3a; color: #3a3a3a; }
.scrub button { font: 9px/12px "DejaVu Sans", sans-serif; color: #d0d0d0; }
.scrub .end { margin-left: auto; }
.tgroup { display: flex; border-radius: 2px; overflow: hidden; box-shadow: 0 0 0 1px #3a3a3a; }
.tgroup button { width: 27px; height: 26px; box-shadow: inset -1px 0 #525252; }
.tgroup svg { width: 27px; height: 26px; }
.tgroup .flip { transform: scaleX(-1); }
.tgroup .letter b { font-size: 14px; }
.orange svg { filter: hue-rotate(-8deg); }

.bottom { display: flex; height: 119px; margin: 2px 0 4px; border-top: 1px solid #606060; border-bottom: 1px solid #5c5c5c; }
.materials { flex: 1; border-right: 1px solid #626262; }
.materials .bar { height: 26px; border-bottom: 1px solid #5e5e5e; }
.mats { display: flex; gap: 5px; padding: 1px; }
.mats figure { width: 43px; border: 1px solid #333; }
.mats svg { width: 41px; height: 42px; }
.mats figcaption { height: 16px; line-height: 15px; background: #fba81c; color: #2a1c04; white-space: nowrap; overflow: hidden; }
.coords { width: 301px; border-left: 1px solid #333; }
.chead { display: grid; grid-template-columns: 12px 87px 86px 1fr; gap: 6px; height: 22px; align-items: center; padding-left: 4px; border-bottom: 1px solid #5e5e5e; color: #8a8a8a; }
.cgrid { display: grid; grid-template-columns: 11px 82px 14px 82px 12px 1fr; gap: 4px 2px; align-items: center; padding: 4px 6px 0 4px; }
.cgrid label + .field { min-width: 0; }
.apply { height: 19px; border-radius: 6px; background: linear-gradient(#747474, #626262); border: 1px solid #3b3b3b; color: #cacaca; }
.status { height: 19px; padding: 4px 4px; border-top: 1px solid #5e5e5e; }

/* managers on the right */
.right { display: flex; flex-direction: column; min-height: 0; padding: 5px 1px 0 1px; border-left: 1px solid #5c5c5c; }
.pane { display: flex; gap: 3px; min-height: 0; }
.pane > section { flex: 1; min-width: 0; display: flex; flex-direction: column; border-top: 1px solid #5e5e5e; }
.right .bar { height: 25px; border-bottom: 1px solid #5c5c5c; padding: 0 1px 0 5px; }
.objects { flex: 48 1 0; margin-bottom: 4px; }
.attrs { flex: 51 1 0; }
.tree { flex: 1; display: flex; border: 1px solid #5a5a5a; border-top: 0; margin-right: 1px; padding-top: 1px; }
.names { width: 73px; border-right: 1px solid #2e2e2e; white-space: nowrap; }
.flags { width: 40px; border-right: 1px solid #6e6e6e; }
.tree li { display: flex; align-items: center; gap: 4px; height: 20px; background: #4f4f4f; padding-left: 1px; }
.tree li.child { padding-left: 12px; }
.names span { padding-left: 2px; }
.exp { width: 12px; height: 18px; fill: none; stroke: #9c9c9c; }
.flags svg { width: 36px; height: 14px; }
.tags { flex: 1; background: linear-gradient(#4f4f4f 0 20px, transparent 20px); }
.tabs { width: 22px; display: flex; flex-direction: column; gap: 2px; align-items: stretch; }
.tabs button { writing-mode: vertical-rl; padding: 6px 2px 6px 3px; background: #353535; color: #6a6a6a; border-radius: 0 3px 3px 0; text-align: center; line-height: 17px; }
.tabs .cur { background: #737373; color: #f2a732; }
.toolname { display: flex; align-items: center; gap: 8px; height: 27px; padding-left: 5px; }
.toolname svg { width: 14px; height: 14px; }
.segs { display: flex; padding-left: 1px; gap: 1px; }
.segs button { width: 83px; height: 19px; background: #676767; color: #c4c4c4; border: 1px solid #555; }
.segs .on { color: #141c2c; border-color: #90aad8; }
.attrs h3 { margin: 6px 1px 0; height: 18px; line-height: 17px; padding-left: 2px; background: #333; font-weight: 700; color: #bdbdbd; }
.form { padding: 4px 5px 0 21px; color: #8e8e8e; }
.checks { display: grid; grid-template-columns: 38px 42px 39px 43px 37px 20px; gap: 0 6px; align-items: center; line-height: 20px; }
input[type=checkbox] { appearance: none; width: 11px; height: 11px; border-radius: 3px; background: #606060; border: 1px solid #3c3c3c; position: relative; }
input[type=checkbox]:checked { background: #3c3c3c; }
input[type=checkbox]:checked::after { content: ""; position: absolute; left: 3px; top: -3px; width: 4px; height: 9px; border: solid #9a9a9a; border-width: 0 2px 2px 0; transform: rotate(35deg); }
.drops { display: flex; align-items: center; gap: 5px; height: 23px; }
.wa { width: 91px; } .wb { width: 65px; }
.second { margin-left: 18px; }
.srow { display: grid; grid-template-columns: 50px 67px 1fr; align-items: center; height: 23px; }
.srow input[type=range] { appearance: none; width: 100%; height: 14px; background: linear-gradient(90deg, #818181 var(--v), #404040 var(--v)); }
input[type=range]::-webkit-slider-thumb { appearance: none; width: 1px; height: 1px; }
.graph { width: 100%; height: auto; }
.gl { stroke: #343434; fill: none; }
.gt text { font: 11px "Noto Sans", sans-serif; fill: #9c9c9c; text-anchor: middle; }

.taskbar { position: relative; display: flex; height: 9px; overflow: hidden; background: linear-gradient(90deg, #20343f 0 60%, #1a2340 75%); }
.taskbar i { width: 47px; margin-left: 495px; background: #52666f; }
.taskbar time { margin: 4px 21px 0 auto; color: #e8e8ee; font-size: 12px; line-height: 12px; }
```
